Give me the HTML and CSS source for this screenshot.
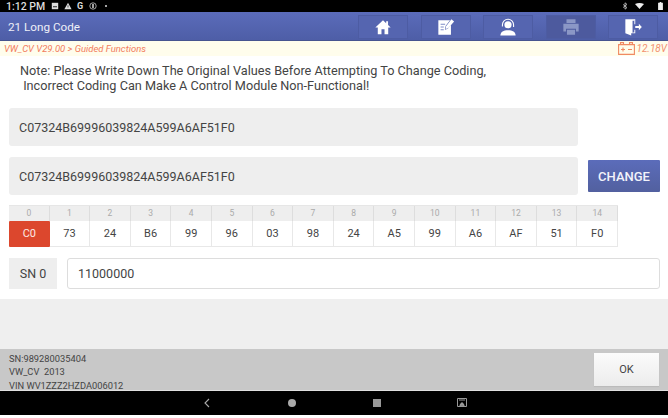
FILE: index.html
```html
<!DOCTYPE html>
<html lang="en">
<head>
<meta charset="utf-8">
<title>21 Long Code</title>
<link rel="stylesheet" href="styles.css">
</head>
<body>
<div class="screen">
  <div class="statusbar">
    <div class="status-left">
      <span class="time">1:12 PM</span>
      <svg class="st" viewBox="0 0 10 10"><path fill="#ddd" d="M1 1h8v8H1z"/><path fill="#000" d="M2.500 5.500h5v1h-5z"/></svg>
      <svg class="st" viewBox="0 0 10 10"><path fill="#ddd" d="M5 1l4.500 8h-9z"/><path fill="#000" d="M4.600 4h.8v3h-.8z"/></svg>
      <span class="g">G</span>
      <svg class="st" viewBox="0 0 10 10"><circle cx="5" cy="5" r="4" fill="none" stroke="#ccc" stroke-width="1"/><path fill="#ccc" d="M4 2.500h2v5H4z"/></svg>
      <span class="dot"></span>
    </div>
    <div class="status-right">
      <svg class="st" viewBox="0 0 10 10"><path fill="none" stroke="#ccc" stroke-width="1" d="M2.500 3l5 4L5 9V1l2.500 2-5 4"/></svg>
      <svg class="wifi" viewBox="0 0 12 8"><path fill="#eee" d="M0 1.200Q6-1 12 1.200L6 8z"/></svg>
      <svg class="batt" viewBox="0 0 6 10"><path fill="#eee" d="M2 0h2v1h2v9H0V1h2z"/></svg>
    </div>
  </div>

  <header class="topbar">
    <div class="title">21 Long Code</div>
    <nav class="tools">
      <button class="tool"><svg viewBox="0 0 20 20"><path fill="#fff" d="M10 2.500L1.500 10.500H4.200V18H8.300V12.500H11.700V18H15.800V10.500H18.500L15.600 7.800V3.500H13.500V5.800z"/></svg></button>
      <button class="tool"><svg viewBox="0 0 20 20"><path fill="#fff" d="M1.500 2.500H14.500L9.500 9 8.800 13 12 12 15.500 7.500V18.500H1.500z"/><path fill="#7e8cc8" d="M4 6.500h5v1H4zM4 9.500h3.500v1H4zM4 12.500h3.500v1H4z"/><path fill="#fff" d="M16 1.500l3 2.300-6.500 7.500-3 1 .6-3.200z"/></svg></button>
      <button class="tool"><svg viewBox="0 0 20 20"><circle cx="10" cy="7.500" r="4" fill="#fff"/><path fill="none" stroke="#fff" stroke-width="1.200" d="M3.800 9.500V7.500a6.200 6.200 0 0 1 12.400 0V10"/><path fill="#fff" d="M1.500 19.500c0-4 3.500-6 8.500-6s8.500 2 8.500 6z"/></svg></button>
      <button class="tool off"><svg viewBox="0 0 20 20"><path fill="#8b97c6" d="M5 1.500h10v4H5zM1.500 6.500h17v8.500H15.500v-3h-11v3H1.500zM5.500 13h9v5.500h-9z"/></svg></button>
      <button class="tool"><svg viewBox="0 0 20 20"><path fill="#fff" d="M1.500 1.500H12.500V3H9.500V17H8V19.500L1.500 17z"/><path fill="#fff" d="M11.500 3h1v4h-1zM11.500 13h1v4h-3v-1h2zM12.500 9h4V6.500L19.800 10 16.500 13.500V11h-4z"/></svg></button>
    </nav>
  </header>

  <div class="crumb">
    <span>VW_CV V29.00 &gt; Guided Functions</span>
    <span class="volt">
      <svg viewBox="0 0 17 13"><path fill="none" stroke="#f08a62" stroke-width="1.100" d="M.6 2.600h15.800v9.800H.6zM2.500 2.500V.6h3v1.900M11.500 2.500V.6h3v1.900M3 7.500h4M5 5.500v4M10 7.500h4"/></svg>
      12.18V
    </span>
  </div>

  <main class="content">
    <p class="note">Note: Please Write Down The Original Values Before Attempting To Change Coding,<br>&nbsp;Incorrect Coding Can Make A Control Module Non-Functional!</p>
    <div class="field-row"><div class="field">C07324B69996039824A599A6AF51F0</div></div>
    <div class="field-row">
      <div class="field">C07324B69996039824A599A6AF51F0</div>
      <button class="change">CHANGE</button>
    </div>
    <div class="bytes">
      <div class="idx">0</div><div class="idx">1</div><div class="idx">2</div><div class="idx">3</div><div class="idx">4</div>
      <div class="idx">5</div><div class="idx">6</div><div class="idx">7</div><div class="idx">8</div><div class="idx">9</div>
      <div class="idx">10</div><div class="idx">11</div><div class="idx">12</div><div class="idx">13</div><div class="idx">14</div>
      <div class="val sel">C0</div><div class="val">73</div><div class="val">24</div><div class="val">B6</div><div class="val">99</div>
      <div class="val">96</div><div class="val">03</div><div class="val">98</div><div class="val">24</div><div class="val">A5</div>
      <div class="val">99</div><div class="val">A6</div><div class="val">AF</div><div class="val">51</div><div class="val">F0</div>
    </div>
    <div class="sn-row">
      <div class="sn-label">SN 0</div>
      <div class="sn-input">11000000</div>
    </div>
  </main>

  <div class="spacer"></div>

  <footer class="footer">
    <div class="info">
      <div>SN:989280035404</div>
      <div>VW_CV&nbsp; 2013</div>
      <div>VIN WV1ZZZ2HZDA006012</div>
    </div>
    <button class="ok">OK</button>
  </footer>

  <div class="navbar">
    <svg class="back" viewBox="0 0 6 10"><path fill="none" stroke="#aaa" stroke-width="1.100" d="M5 1L1 5l4 4"/></svg>
    <span class="home"></span>
    <span class="recent"></span>
    <svg class="shot" viewBox="0 0 10 10"><path fill="none" stroke="#999" stroke-width="1" d="M.5.500h9v8h-9z"/><path fill="#999" d="M2 1.500h6v1H2zM3 6l2-2 2 2 1 3H6L5 7.500 4 9H2z"/></svg>
  </div>
  <div class="edge"></div>
</div>
</body>
</html>
```

FILE: styles.css
```css
* { box-sizing: border-box; }
html, body { margin: 0; padding: 0; }
body { width: 668px; height: 418px; overflow: hidden; background: #fff; font-family: Roboto, "Liberation Sans", sans-serif; color: #3c3c3c; }
button { font-family: inherit; border: 0; padding: 0; }
.screen { width: 668px; height: 418px; display: flex; flex-direction: column; }

.statusbar { height: 12px; background: #000; color: #ddd; display: flex; justify-content: space-between; align-items: center; padding: 0 5px 0 6px; }
.status-left, .status-right { display: flex; align-items: center; }
.time { font-size: 10.500px; font-weight: 500; color: #ddd; width: 45px; }
.st { width: 8px; height: 8px; margin-right: 5px; display: block; }
.g { font-size: 9px; font-weight: 700; width: 12px; }
.dot { width: 2px; height: 2px; border-radius: 50%; background: #ddd; margin-left: 3px; }
.wifi { width: 9px; height: 6px; margin-right: 14px; display: block; }
.batt { width: 5px; height: 8px; display: block; }
.status-right .st { margin-right: 6px; }

.topbar { height: 29px; background: linear-gradient(#5b6cba, #4d5da6); display: flex; justify-content: space-between; box-shadow: inset 0 -1px 0 #46548f; }
.title { font-size: 11.700px; color: #eef0f8; padding: 8px 0 0 8px; }
.tools { display: flex; gap: 12.500px; padding: 3px 10px 0 0; }
.tool { width: 50px; height: 24px; background: #5565b0; border: 1px solid #4d5ca3; display: flex; align-items: center; justify-content: center; }
.tool svg { width: 18px; height: 18px; display: block; }
.tool.off { background: #4d5a9e; }

.crumb { height: 15px; background: #fffdec; color: #f27c5c; font-size: 9.470px; font-style: italic; display: flex; justify-content: space-between; align-items: center; padding: 0 1px 0 4px; }
.volt { font-size: 10px; display: flex; align-items: center; gap: 1px; color: #f2906e; }
.volt svg { width: 17px; height: 13px; display: block; }

.content { height: 243px; background: #fff; padding: 8px 8px 0 9px; }
.note { margin: 0 0 0 11px; height: 44px; font-size: 12.700px; line-height: 14.500px; color: #444; }
.field-row { display: flex; align-items: center; gap: 10px; margin-bottom: 11px; }
.field { width: 569px; height: 38px; background: #eee; border-radius: 3px; font-size: 12.500px; line-height: 39px; padding-left: 10px; color: #444; }
.change { width: 72px; height: 32px; background: linear-gradient(#5b6cba, #52609f); color: #f2f3fa; font-size: 13px; font-weight: 500; border-radius: 1px; }

.bytes { width: 609px; display: grid; grid-template-columns: repeat(15, 1fr); grid-template-rows: 15px 26px; border-top: 1px solid #e6e6e6; margin-top: -1px; }
.idx { background: #eee; border-right: 1px solid #ddd; font-size: 8.500px; color: #aaa; text-align: center; line-height: 15px; }
.val { background: #fff; border-right: 1px solid #e8e8e8; border-bottom: 1px solid #e8e8e8; font-size: 11px; color: #444; text-align: center; line-height: 26px; }
.val.sel { background: #dc472d; color: #fde9e4; border: 0; border-radius: 1px; }

.sn-row { display: flex; gap: 10px; margin-top: 11px; }
.sn-label { width: 48px; height: 31px; background: #eee; font-size: 12.500px; line-height: 31px; text-align: center; color: #444; }
.sn-input { width: 593px; height: 31px; border: 1px solid #ddd; border-radius: 3px; background: #fff; font-size: 12.500px; line-height: 29px; padding-left: 10px; color: #444; }

.spacer { height: 50px; background: #efefef; }

.footer { height: 42px; background: #c8c8c8; display: flex; justify-content: space-between; padding: 3px 9px 0 9px; border-bottom: 1px solid #e0e0e0; overflow: hidden; }
.info { font-size: 9.300px; line-height: 13.300px; color: #444; }
.ok { width: 65px; height: 33px; margin-top: 1px; background: linear-gradient(#fbfbfb, #ececec); font-size: 11px; color: #444; box-shadow: 0 1px 1px #bbb; }

.navbar { height: 24px; background: #000; display: flex; align-items: center; }
.back { width: 6px; height: 10px; margin-left: 204px; display: block; }
.home { width: 8px; height: 8px; border-radius: 50%; background: #aaa; margin-left: 78px; }
.recent { width: 8px; height: 8px; background: #999; margin-left: 77px; }
.shot { width: 10px; height: 10px; margin-left: 76px; display: block; }
.edge { height: 2px; background: #fff; }
```
